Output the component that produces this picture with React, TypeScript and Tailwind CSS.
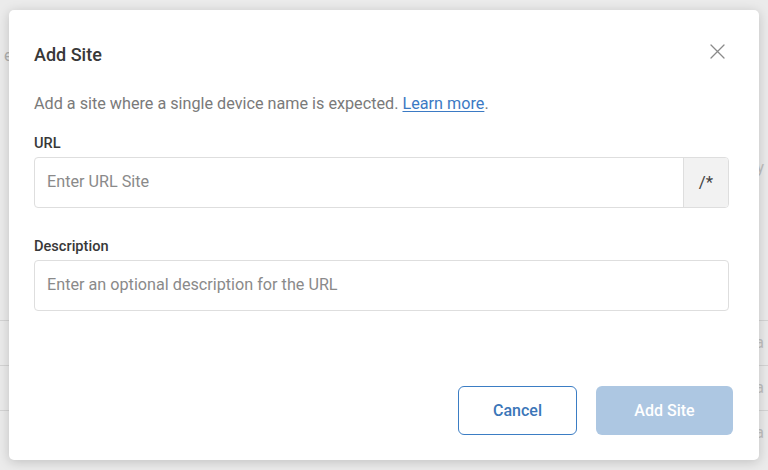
const rows = ["a", "a", "a"];

function CloseIcon() {
  return (
    <svg width="15" height="15" viewBox="0 0 15 15" fill="none" className="mb-[8px] text-[#8a8a8a]">
      <path d="M1 1L14 14M14 1L1 14" stroke="currentColor" strokeWidth="1.3" strokeLinecap="round" />
    </svg>
  );
}

export default function App() {
  return (
    <div
      className="relative h-[470px] w-[768px] overflow-hidden bg-[#fafafa]"
      style={{ fontFamily: "Roboto, 'Liberation Sans', sans-serif" }}
    >
      {/* Page behind the dialog */}
      <div className="flex h-full flex-col">
        <div className="flex h-[60px] items-end px-1 text-[16px] text-[#bbb]">
          <span className="mb-[-8px]">e</span>
        </div>
        <div className="flex h-[120px] items-end justify-end pr-1 text-[16px] text-[#ccc]">
          <span>y</span>
        </div>
        <div className="h-[140px]" />
        <div className="flex flex-col">
          {rows.map((r, i) => (
            <div
              key={i}
              className="flex h-[45px] items-center justify-end border-t border-[#e2e2e2] pr-1 text-[16px] text-[#ccc]"
            >
              {r}
            </div>
          ))}
        </div>
      </div>

      {/* Backdrop */}
      <div className="absolute inset-0 bg-black/[0.06]" />

      {/* Dialog */}
      <div className="absolute left-[9px] top-[10px] flex h-[450px] w-[750px] flex-col rounded-[5px] bg-white shadow-[0_2px_12px_rgba(0,0,0,0.18)]">
        <div className="flex items-center justify-between pl-[25px] pr-[34px] pt-[33px]">
          <h2 className="text-[18px] font-medium leading-[24px] text-[#383838]">Add Site</h2>
          <CloseIcon />
        </div>

        <div className="flex flex-col pl-[25px] pr-[30px]">
          <p className="mt-[26px] text-[16.2px] leading-[22px] text-[#7a7a7a]">
            Add a site where a single device name is expected.{" "}
            <a href="#" className="text-[#3b7ac4] underline underline-offset-2">
              Learn more
            </a>
            .
          </p>

          <label className="mt-[19px] text-[14.6px] font-medium leading-[18px] text-[#383838]">URL</label>
          <div className="mt-[5px] flex h-[51px] overflow-hidden rounded-[4px] border border-[#dedede]">
            <div className="flex flex-1 items-center px-[12px] text-[16.2px] text-[#8a8a8a]">
              Enter URL Site
            </div>
            <div className="flex w-[45px] items-center justify-center border-l border-[#dedede] bg-[#f2f2f2] text-[17px] text-[#444]">
              /*
            </div>
          </div>

          <label className="mt-[29px] text-[14.6px] font-medium leading-[18px] text-[#383838]">Description</label>
          <div className="mt-[5px] flex h-[51px] items-center rounded-[4px] border border-[#dedede] px-[12px] text-[16.2px] text-[#8a8a8a]">
            Enter an optional description for the URL
          </div>
        </div>

        <div className="mt-auto flex justify-end gap-[19px] pb-[25px] pr-[26px]">
          <button className="h-[49px] w-[119px] rounded-[6px] border border-[#3b7dc4] text-[16px] font-medium text-[#3b76b8]">
            Cancel
          </button>
          <button className="h-[49px] w-[137px] rounded-[6px] bg-[#adc7e2] text-[16px] font-medium text-white">
            Add Site
          </button>
        </div>
      </div>
    </div>
  );
}
